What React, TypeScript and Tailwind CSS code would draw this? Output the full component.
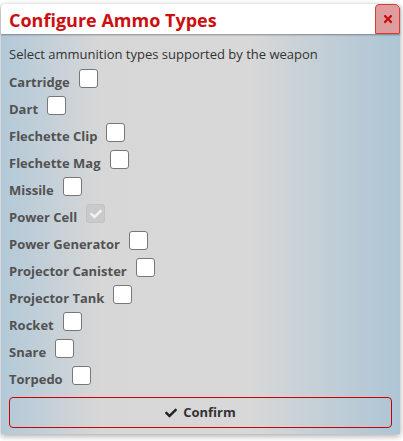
import React from "react";
import { FaCheck, FaTimes } from "react-icons/fa";

const items: { name: string; checked?: boolean; disabled?: boolean }[] = [
  { name: "Cartridge" },
  { name: "Dart" },
  { name: "Flechette Clip" },
  { name: "Flechette Mag" },
  { name: "Missile" },
  { name: "Power Cell", checked: true, disabled: true },
  { name: "Power Generator" },
  { name: "Projector Canister" },
  { name: "Projector Tank" },
  { name: "Rocket" },
  { name: "Snare" },
  { name: "Torpedo" },
];

export default function App() {
  return (
    <div
      className="relative w-[403px] h-[441px] bg-white overflow-hidden"
      style={{ fontFamily: '"Open Sans", "Liberation Sans", sans-serif' }}
    >
      <div className="absolute left-[1px] top-[4px] w-[399px] h-[430px] flex flex-col shadow-[0_2px_6px_rgba(0,0,0,0.35)] rounded-t-[4px] bg-[linear-gradient(to_right,#b3c9d8_0%,#d7d7d7_25%,#d8d8d8_62%,#adc5d5_100%)]">
        <div className="flex h-[30px] bg-white rounded-t-[4px] shadow-[0_1px_2px_rgba(0,0,0,0.35)] relative z-10">
          <div className="flex-1 flex items-center pl-[8px] pt-[1px] text-[18px] font-bold text-[#cc0f0f] leading-none">
            Configure Ammo Types
          </div>
          <div className="w-[25px] h-[30px] flex items-center justify-center bg-[#df9c9c] border border-[#d83a3a] rounded-tr-[5px] rounded-tl-[4px]">
            <FaTimes className="text-[#c81010] w-[12px] h-[12px]" />
          </div>
        </div>
        <div className="flex flex-col px-[8px] pt-[11px]">
          <p className="text-[13px] leading-[18px] text-[#333]">
            Select ammunition types supported by the weapon
          </p>
          <div className="flex flex-col mt-[1px]">
            {items.map((it) => (
              <div key={it.name} className="flex items-end h-[27px] gap-[9px]">
                <span className="text-[13px] leading-[17px] font-bold text-[#525252]">{it.name}</span>
                {it.disabled ? (
                  <div className="w-[19px] h-[19px] mb-[3px] rounded-[3px] bg-[#c9cacb] border border-[#c2c2c2] flex items-center justify-center">
                    <FaCheck className="text-[#f2f2f2] w-[12px] h-[12px]" />
                  </div>
                ) : (
                  <div className="w-[19px] h-[19px] mb-[3px] rounded-[3px] bg-white border border-[#777]" />
                )}
              </div>
            ))}
          </div>
          <div className="mt-[9px] h-[31px] border border-[#cc0000] rounded-[4px] flex items-center justify-center gap-[6px] text-[13px] font-bold text-[#333]">
            <FaCheck className="w-[12px] h-[12px] text-[#222]" />
            <span>Confirm</span>
          </div>
        </div>
      </div>
    </div>
  );
}
